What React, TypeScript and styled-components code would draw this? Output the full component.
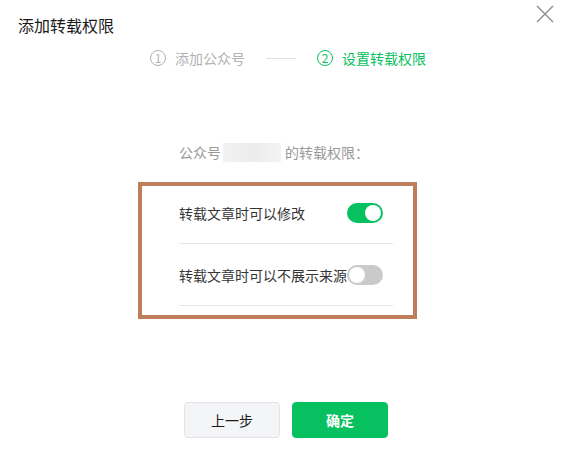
import { useState } from 'react';
import styled, { createGlobalStyle } from 'styled-components';

const GlobalStyle = createGlobalStyle`
  html, body {
    margin: 0;
    padding: 0;
    background: #fff;
  }
  body {
    font-family: "Noto Sans CJK SC", "Microsoft YaHei", "Noto Sans", sans-serif;
    -webkit-font-smoothing: antialiased;
  }
  * {
    box-sizing: border-box;
  }
`;

const Dialog = styled.div`
  position: relative;
  width: 584px;
  height: 450px;
  background: #fff;
  overflow: hidden;
`;

const Title = styled.h3`
  margin: 13px 0 0 18px;
  font-size: 16px;
  line-height: 24px;
  font-weight: 400;
  color: #1a1a1a;
`;

const CloseBtn = styled.button`
  position: absolute;
  top: 5px;
  right: 30px;
  width: 18px;
  height: 18px;
  padding: 0;
  border: 0;
  background: transparent;
  cursor: pointer;
  svg {
    display: block;
  }
`;

const Steps = styled.div`
  display: flex;
  align-items: center;
  justify-content: center;
  margin-top: 11px;
  padding-right: 8px;
  height: 20px;
`;

const Step = styled.div<{ active?: boolean }>`
  display: flex;
  align-items: center;
  gap: 9px;
  font-size: 14px;
  line-height: 20px;
  color: ${(props) => (props.active ? '#07c160' : '#b2b2b2')};
`;

const StepNo = styled.span`
  width: 16px;
  height: 16px;
  border: 1px solid currentColor;
  border-radius: 50%;
  display: flex;
  align-items: center;
  justify-content: center;
  font-size: 12px;
  line-height: 1;
`;

const StepLine = styled.span`
  width: 30px;
  height: 1px;
  margin: 0 21px 0 21px;
  background: #e0e0e0;
`;

const Content = styled.div`
  width: 214px;
  margin: 74px 0 0 179px;
`;

const Intro = styled.p`
  margin: 0;
  display: flex;
  align-items: center;
  font-size: 14px;
  line-height: 20px;
  color: #999;
`;

const Masked = styled.span`
  width: 58px;
  height: 19px;
  margin: 0 4px 0 2px;
  background: linear-gradient(90deg, #f2f2f2, #ececec 50%, #f3f3f3);
`;

const List = styled.ul`
  position: relative;
  margin: 20px 0 0;
  padding: 0;
  list-style: none;
  /* 标注框 */
  &::after {
    content: '';
    position: absolute;
    top: 0;
    left: -41px;
    right: -24px;
    bottom: -13px;
    border: 4px solid #bf7e5b;
    pointer-events: none;
  }
`;

const Row = styled.li`
  display: flex;
  align-items: center;
  height: 62px;
  border-bottom: 1px solid #e7e7e7;
`;

const Label = styled.span`
  flex: 0 0 168px;
  white-space: nowrap;
  font-size: 14px;
  line-height: 20px;
  color: #353535;
`;

const Switch = styled.button<{ checked: boolean }>`
  position: relative;
  width: 36px;
  height: 20px;
  padding: 0;
  border: 0;
  border-radius: 10px;
  background: ${(props) => (props.checked ? '#07c160' : '#cacaca')};
  cursor: pointer;
  &::after {
    content: '';
    position: absolute;
    top: 2px;
    left: ${(props) => (props.checked ? '18px' : '2px')};
    width: 16px;
    height: 16px;
    border-radius: 50%;
    background: #fff;
    transition: left 0.2s;
  }
`;

const Footer = styled.div`
  display: flex;
  justify-content: center;
  gap: 12px;
  margin-top: 96px;
`;

const Button = styled.button<{ primary?: boolean }>`
  width: 96px;
  height: 36px;
  border-radius: 4px;
  font-family: inherit;
  font-size: 14px;
  font-weight: ${(props) => (props.primary ? 600 : 400)};
  color: ${(props) => (props.primary ? '#fff' : '#191919')};
  background: ${(props) => (props.primary ? '#07c160' : '#f4f5f7')};
  border: 1px solid ${(props) => (props.primary ? '#07c160' : '#e2e3e6')};
  cursor: pointer;
`;

function App() {
  const [allowEdit, setAllowEdit] = useState(true);
  const [hideSource, setHideSource] = useState(false);

  return (
    <>
      <GlobalStyle />
      <Dialog>
        <Title>添加转载权限</Title>
        <CloseBtn aria-label="关闭">
          <svg width="18" height="18" viewBox="0 0 18 18">
            <path d="M1 1L17 17M17 1L1 17" stroke="#8c8c8c" strokeWidth="1.4" fill="none" />
          </svg>
        </CloseBtn>

        <Steps>
          <Step>
            <StepNo>1</StepNo>
            添加公众号
          </Step>
          <StepLine />
          <Step active>
            <StepNo>2</StepNo>
            设置转载权限
          </Step>
        </Steps>

        <Content>
          <Intro>
            公众号
            <Masked />
            的转载权限：
          </Intro>
          <List>
            <Row>
              <Label>转载文章时可以修改</Label>
              <Switch checked={allowEdit} onClick={() => setAllowEdit(!allowEdit)} />
            </Row>
            <Row>
              <Label>转载文章时可以不展示来源</Label>
              <Switch checked={hideSource} onClick={() => setHideSource(!hideSource)} />
            </Row>
          </List>
          <Footer>
            <Button>上一步</Button>
            <Button primary>确定</Button>
          </Footer>
        </Content>
      </Dialog>
    </>
  );
}

export default App;
